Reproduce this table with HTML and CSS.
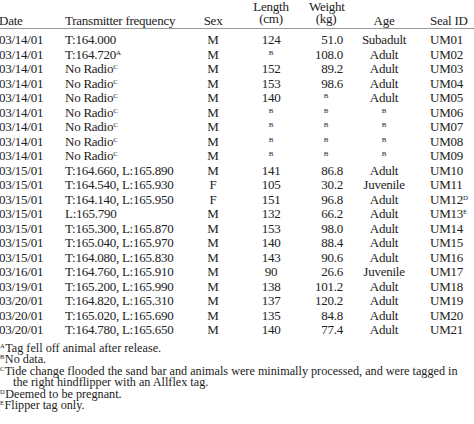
FILE: index.html
```html
<!DOCTYPE html>
<html>
<head>
<meta charset="utf-8">
<link rel="stylesheet" href="styles.css">
</head>
<body>
<div class="table">
  <div class="row head">
    <div class="c-date">Date</div>
    <div class="c-tx">Transmitter frequency</div>
    <div class="c-sex">Sex</div>
    <div class="c-len two">Length<br>(cm)</div>
    <div class="c-wt two">Weight<br>(kg)</div>
    <div class="c-age">Age</div>
    <div class="c-id">Seal ID</div>
  </div>
  <div class="body">
    <div class="row"><div class="c-date">03/14/01</div><div class="c-tx">T:164.000</div><div class="c-sex">M</div><div class="c-len">124</div><div class="c-wt">51.0</div><div class="c-age">Subadult</div><div class="c-id">UM01</div></div>
    <div class="row"><div class="c-date">03/14/01</div><div class="c-tx">T:164.720<sup>A</sup></div><div class="c-sex">M</div><div class="c-len"><sup>B</sup></div><div class="c-wt">108.0</div><div class="c-age">Adult</div><div class="c-id">UM02</div></div>
    <div class="row"><div class="c-date">03/14/01</div><div class="c-tx">No Radio<sup>C</sup></div><div class="c-sex">M</div><div class="c-len">152</div><div class="c-wt">89.2</div><div class="c-age">Adult</div><div class="c-id">UM03</div></div>
    <div class="row"><div class="c-date">03/14/01</div><div class="c-tx">No Radio<sup>C</sup></div><div class="c-sex">M</div><div class="c-len">153</div><div class="c-wt">98.6</div><div class="c-age">Adult</div><div class="c-id">UM04</div></div>
    <div class="row"><div class="c-date">03/14/01</div><div class="c-tx">No Radio<sup>C</sup></div><div class="c-sex">M</div><div class="c-len">140</div><div class="c-wt nd"><sup>B</sup></div><div class="c-age">Adult</div><div class="c-id">UM05</div></div>
    <div class="row"><div class="c-date">03/14/01</div><div class="c-tx">No Radio<sup>C</sup></div><div class="c-sex">M</div><div class="c-len"><sup>B</sup></div><div class="c-wt nd"><sup>B</sup></div><div class="c-age"><sup>B</sup></div><div class="c-id">UM06</div></div>
    <div class="row"><div class="c-date">03/14/01</div><div class="c-tx">No Radio<sup>C</sup></div><div class="c-sex">M</div><div class="c-len"><sup>B</sup></div><div class="c-wt nd"><sup>B</sup></div><div class="c-age"><sup>B</sup></div><div class="c-id">UM07</div></div>
    <div class="row"><div class="c-date">03/14/01</div><div class="c-tx">No Radio<sup>C</sup></div><div class="c-sex">M</div><div class="c-len"><sup>B</sup></div><div class="c-wt nd"><sup>B</sup></div><div class="c-age"><sup>B</sup></div><div class="c-id">UM08</div></div>
    <div class="row"><div class="c-date">03/14/01</div><div class="c-tx">No Radio<sup>C</sup></div><div class="c-sex">M</div><div class="c-len"><sup>B</sup></div><div class="c-wt nd"><sup>B</sup></div><div class="c-age"><sup>B</sup></div><div class="c-id">UM09</div></div>
    <div class="row"><div class="c-date">03/15/01</div><div class="c-tx">T:164.660, L:165.890</div><div class="c-sex">M</div><div class="c-len">141</div><div class="c-wt">86.8</div><div class="c-age">Adult</div><div class="c-id">UM10</div></div>
    <div class="row"><div class="c-date">03/15/01</div><div class="c-tx">T:164.540, L:165.930</div><div class="c-sex">F</div><div class="c-len">105</div><div class="c-wt">30.2</div><div class="c-age">Juvenile</div><div class="c-id">UM11</div></div>
    <div class="row"><div class="c-date">03/15/01</div><div class="c-tx">T:164.140, L:165.950</div><div class="c-sex">F</div><div class="c-len">151</div><div class="c-wt">96.8</div><div class="c-age">Adult</div><div class="c-id">UM12<sup>D</sup></div></div>
    <div class="row"><div class="c-date">03/15/01</div><div class="c-tx">L:165.790</div><div class="c-sex">M</div><div class="c-len">132</div><div class="c-wt">66.2</div><div class="c-age">Adult</div><div class="c-id">UM13<sup>E</sup></div></div>
    <div class="row"><div class="c-date">03/15/01</div><div class="c-tx">T:165.300, L:165.870</div><div class="c-sex">M</div><div class="c-len">153</div><div class="c-wt">98.0</div><div class="c-age">Adult</div><div class="c-id">UM14</div></div>
    <div class="row"><div class="c-date">03/15/01</div><div class="c-tx">T:165.040, L:165.970</div><div class="c-sex">M</div><div class="c-len">140</div><div class="c-wt">88.4</div><div class="c-age">Adult</div><div class="c-id">UM15</div></div>
    <div class="row"><div class="c-date">03/15/01</div><div class="c-tx">T:164.080, L:165.830</div><div class="c-sex">M</div><div class="c-len">143</div><div class="c-wt">90.6</div><div class="c-age">Adult</div><div class="c-id">UM16</div></div>
    <div class="row"><div class="c-date">03/16/01</div><div class="c-tx">T:164.760, L:165.910</div><div class="c-sex">M</div><div class="c-len">90</div><div class="c-wt">26.6</div><div class="c-age">Juvenile</div><div class="c-id">UM17</div></div>
    <div class="row"><div class="c-date">03/19/01</div><div class="c-tx">T:165.200, L:165.990</div><div class="c-sex">M</div><div class="c-len">138</div><div class="c-wt">101.2</div><div class="c-age">Adult</div><div class="c-id">UM18</div></div>
    <div class="row"><div class="c-date">03/20/01</div><div class="c-tx">T:164.820, L:165.310</div><div class="c-sex">M</div><div class="c-len">137</div><div class="c-wt">120.2</div><div class="c-age">Adult</div><div class="c-id">UM19</div></div>
    <div class="row"><div class="c-date">03/20/01</div><div class="c-tx">T:165.020, L:165.690</div><div class="c-sex">M</div><div class="c-len">135</div><div class="c-wt">84.8</div><div class="c-age">Adult</div><div class="c-id">UM20</div></div>
    <div class="row"><div class="c-date">03/20/01</div><div class="c-tx">T:164.780, L:165.650</div><div class="c-sex">M</div><div class="c-len">140</div><div class="c-wt">77.4</div><div class="c-age">Adult</div><div class="c-id">UM21</div></div>
  </div>
</div>
<div class="notes">
  <p class="note"><sup>A</sup>Tag fell off animal after release.</p>
  <p class="note"><sup>B</sup>No data.</p>
  <p class="note"><sup>C</sup>Tide change flooded the sand bar and animals were minimally processed, and were tagged in the right hindflipper with an Allflex tag.</p>
  <p class="note"><sup>D</sup>Deemed to be pregnant.</p>
  <p class="note"><sup>E</sup>Flipper tag only.</p>
</div>
</body>
</html>
```
FILE: styles.css
```css
html, body {
  margin: 0;
  padding: 0;
  background: #ffffff;
}
body {
  width: 474px;
  height: 424px;
  overflow: hidden;
  font-family: "Liberation Serif", "Times New Roman", serif;
  color: #222222;
}
.table {
  margin-left: -1px;
  font-size: 13px;
  letter-spacing: -0.25px;
}
.row {
  display: grid;
  grid-template-columns: 66px 128px 40px 76px 34px 82px 1fr;
  line-height: 14.5px;
  white-space: nowrap;
}
.head {
  line-height: 12px;
  align-items: end;
  padding-top: 1px;
  padding-bottom: 1px;
  border-bottom: 1px solid #9a9a9a;
}
.head .two {
  margin-bottom: 2px;
  text-align: center;
}
.body {
  padding-top: 4px;
}
.c-date, .c-tx { text-align: left; }
.c-sex { text-align: center; }
.c-len { text-align: center; }
.c-wt { text-align: right; }
.c-wt.nd { text-align: center; }
.head .c-wt { text-align: center; }
.c-age { text-align: center; }
.c-id { text-align: left; padding-left: 5px; }
sup {
  font-size: 7px;
  line-height: 0;
  vertical-align: 4px;
  letter-spacing: 0;
}
.notes {
  margin-top: 5px;
  font-size: 12.2px;
  line-height: 11.5px;
  letter-spacing: 0;
}
.note {
  margin: 0;
  padding-left: 13px;
  text-indent: -13px;
}
.note sup {
  font-size: 6.5px;
  vertical-align: 4px;
  margin-right: 0.5px;
}
```
